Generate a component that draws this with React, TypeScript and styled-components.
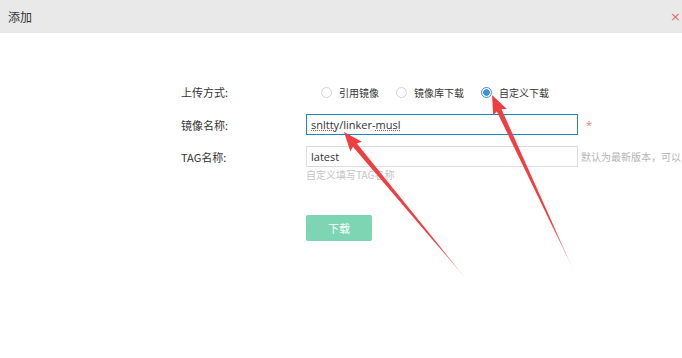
import { styled, createGlobalStyle } from 'styled-components';

const GlobalStyle = createGlobalStyle`
  html, body {
    margin: 0;
    padding: 0;
    background: #ffffff;
    overflow: hidden;
  }
  body {
    font-family: "Open Sans", "Noto Sans CJK SC", sans-serif;
    font-size: 12px;
    color: #333;
  }
`;

type Pt = [number, number];

// tapered annotation arrow, tail -> tip
const arrowPoints = (tail: Pt, tip: Pt) => {
  const dx = tip[0] - tail[0];
  const dy = tip[1] - tail[1];
  const len = Math.hypot(dx, dy);
  const ux = dx / len;
  const uy = dy / len;
  const nx = -uy;
  const ny = ux;
  const headLen = 17;
  const headW = 7.5;
  const shaftW = 2.6;
  const base: Pt = [tip[0] - ux * headLen, tip[1] - uy * headLen];
  const pts: Pt[] = [
    tail,
    [base[0] + nx * shaftW, base[1] + ny * shaftW],
    [base[0] - ux * 2 + nx * headW, base[1] - uy * 2 + ny * headW],
    tip,
    [base[0] - ux * 2 - nx * headW, base[1] - uy * 2 - ny * headW],
    [base[0] - nx * shaftW, base[1] - ny * shaftW],
  ];
  return pts.map((p) => p.map((v) => v.toFixed(1)).join(',')).join(' ');
};

const arrows: { tail: Pt; tip: Pt }[] = [
  { tail: [467, 280], tip: [344, 132] },
  { tail: [573, 269], tip: [492, 95] },
];

const uploadTypes = [
  { label: '引用镜像', checked: false },
  { label: '镜像库下载', checked: false },
  { label: '自定义下载', checked: true },
];

const App = () => {
  return (
    <>
      <GlobalStyle />
      <Page>
        <Header>
          <span>添加</span>
          <Close>×</Close>
        </Header>

        <Form>
          <Row $height={22}>
            <Label>上传方式:</Label>
            <RadioGroup>
              {uploadTypes.map((t) => (
                <RadioItem key={t.label}>
                  <RadioDot $checked={t.checked} />
                  {t.label}
                </RadioItem>
              ))}
            </RadioGroup>
          </Row>

          <Row $height={21} $top={11}>
            <Label>镜像名称:</Label>
            <InputBox $focused>
              <Squiggle>snltty</Squiggle>/linker-<Squiggle>musl</Squiggle>
            </InputBox>
            <Required>*</Required>
          </Row>

          <Row $height={21} $top={11}>
            <Label>TAG名称:</Label>
            <InputBox>latest</InputBox>
            <SideHint>默认为最新版本，可以</SideHint>
          </Row>

          <Row $height={14} $top={0}>
            <Label />
            <Hint>自定义填写TAG名称</Hint>
          </Row>

          <Row $height={26} $top={34}>
            <Label />
            <Button>下载</Button>
          </Row>
        </Form>

        <Overlay width="682" height="358" viewBox="0 0 682 358">
          <defs>
            <linearGradient id="fade1" gradientUnits="userSpaceOnUse" x1="467" y1="280" x2="344" y2="132">
              <stop offset="0" stopColor="#f0484a" stopOpacity="0.2" />
              <stop offset="0.25" stopColor="#ef3f42" />
              <stop offset="1" stopColor="#ef3f42" />
            </linearGradient>
            <linearGradient id="fade2" gradientUnits="userSpaceOnUse" x1="573" y1="269" x2="492" y2="95">
              <stop offset="0" stopColor="#f0484a" stopOpacity="0.2" />
              <stop offset="0.25" stopColor="#ef3f42" />
              <stop offset="1" stopColor="#ef3f42" />
            </linearGradient>
          </defs>
          {arrows.map((a, i) => (
            <polygon key={i} points={arrowPoints(a.tail, a.tip)} fill={`url(#fade${i + 1})`} />
          ))}
        </Overlay>
      </Page>
    </>
  );
};

export default App;

const Page = styled.div`
  position: relative;
  width: 682px;
  height: 358px;
  overflow: hidden;
  background: #fff;
`;

const Header = styled.div`
  display: flex;
  align-items: center;
  justify-content: space-between;
  height: 33px;
  padding: 0 1px 0 8px;
  background: #e9e9e9;
  font-family: "Noto Sans CJK SC", sans-serif;
  font-size: 12px;
  color: #333;
`;

const Close = styled.span`
  color: #e86a6a;
  font-family: "DejaVu Sans", sans-serif;
  font-size: 13px;
  line-height: 1;
`;

const Form = styled.div`
  display: flex;
  flex-direction: column;
  padding: 48px 0 0 181px;
`;

const Row = styled.div<{ $height: number; $top?: number }>`
  display: flex;
  align-items: center;
  height: ${(p) => p.$height}px;
  margin-top: ${(p) => p.$top ?? 0}px;
`;

const Label = styled.div`
  width: 125px;
  flex-shrink: 0;
  font-family: "Noto Sans CJK SC", sans-serif;
  font-size: 11px;
  color: #333;
`;

const RadioGroup = styled.div`
  display: flex;
  align-items: center;
  gap: 17px;
  padding-left: 15px;
`;

const RadioItem = styled.label`
  display: flex;
  align-items: center;
  gap: 7px;
  font-family: "Noto Sans CJK SC", sans-serif;
  font-size: 10px;
  color: #333;
`;

const RadioDot = styled.span<{ $checked?: boolean }>`
  box-sizing: border-box;
  width: 11px;
  height: 11px;
  border-radius: 50%;
  border: 1px solid ${(p) => (p.$checked ? '#3c8fdc' : '#d2d2d2')};
  background: ${(p) => (p.$checked ? 'radial-gradient(circle, #3c8fdc 0 3px, #fff 3.5px)' : '#fff')};
`;

const InputBox = styled.div<{ $focused?: boolean }>`
  box-sizing: border-box;
  display: flex;
  align-items: center;
  flex-shrink: 0;
  width: 272px;
  height: 21px;
  padding-left: 4px;
  border: 1px solid ${(p) => (p.$focused ? '#1d86bf' : '#dcdcdc')};
  font-family: "Open Sans", sans-serif;
  font-size: 11px;
  color: #333;
  white-space: pre;
`;

const Squiggle = styled.span`
  text-decoration: underline dotted #e04040;
  text-decoration-thickness: 1px;
  text-underline-offset: 1px;
`;

const Required = styled.span`
  margin-left: 8px;
  color: #ec7a7a;
  font-size: 11px;
`;

const SideHint = styled.span`
  margin-left: 3px;
  white-space: nowrap;
  font-family: "Noto Sans CJK SC", sans-serif;
  font-size: 10px;
  color: #b5b5b5;
`;

const Hint = styled.span`
  font-family: "Noto Sans CJK SC", sans-serif;
  font-size: 10px;
  color: #c4c4c4;
`;

const Button = styled.button`
  width: 66px;
  height: 26px;
  border: none;
  border-radius: 2px;
  background: #7dd5b4;
  color: #fff;
  font-family: "Noto Sans CJK SC", sans-serif;
  font-size: 11px;
`;

const Overlay = styled.svg`
  position: absolute;
  top: 0;
  left: 0;
  pointer-events: none;
`;
